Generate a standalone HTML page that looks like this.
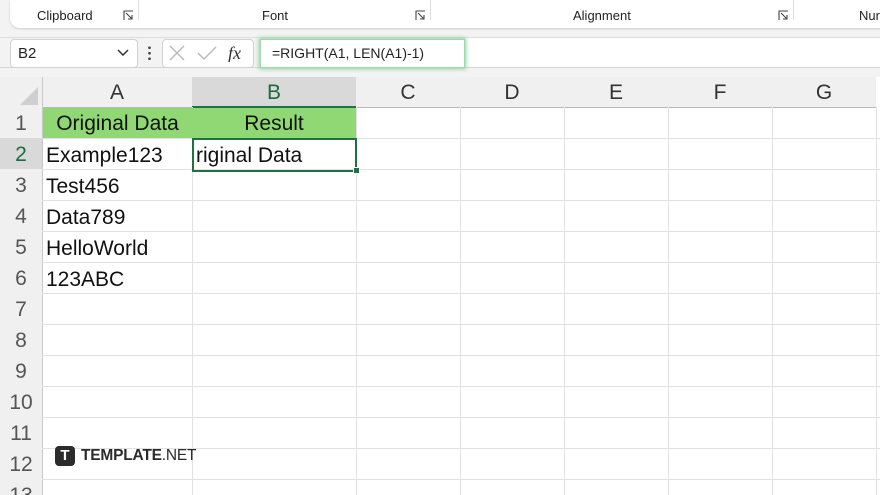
<!DOCTYPE html>
<html><head><style>
html,body{margin:0;width:880px;height:495px;overflow:hidden}
body{background:#f3f3f3;font-family:"Liberation Sans",sans-serif;position:relative}
.abs{position:absolute}
.rib{left:10px;top:0;width:880px;height:28px;background:#fff;border-radius:0 0 0 10px;box-shadow:0 1px 2px #ccc}
.rl{top:8px;font-size:13px;color:#222}
.sep{top:0;width:1px;height:20px;background:#ddd}
.grid{left:0;top:77px;width:880px;height:418px;background:#fff}
.ch{top:77px;height:30px;background:#f0f0f0;border-bottom:1px solid #b8b8b8;text-align:center;font-size:21px;line-height:32px;color:#333}
.rh{left:0;width:42px;background:#f0f0f0;text-align:center;font-size:21px;color:#555;line-height:33px;height:31px}
.vl{top:107px;width:1px;height:388px;background:#e1e1e1}
.hl{left:42px;width:838px;height:1px;background:#e1e1e1}
.cell{font-size:21px;color:#111;line-height:33px}
</style></head><body>
<div class="abs rib"></div>
<div class="abs rl" style="left:37px">Clipboard</div>
<svg class="abs" style="left:123px;top:10px" width="11" height="11"><path d="M1 10V1H10M3 3L9 9M5 9H9V5" stroke="#444" stroke-width="1.1" fill="none"/></svg>
<div class="abs sep" style="left:138px"></div>
<div class="abs rl" style="left:262px">Font</div>
<svg class="abs" style="left:415px;top:10px" width="11" height="11"><path d="M1 10V1H10M3 3L9 9M5 9H9V5" stroke="#444" stroke-width="1.1" fill="none"/></svg>
<div class="abs sep" style="left:430px"></div>
<div class="abs rl" style="left:573px">Alignment</div>
<svg class="abs" style="left:778px;top:10px" width="11" height="11"><path d="M1 10V1H10M3 3L9 9M5 9H9V5" stroke="#444" stroke-width="1.1" fill="none"/></svg>
<div class="abs sep" style="left:793px"></div>
<div class="abs rl" style="left:859px">Nur</div>
<div class="abs" style="left:0;top:37px;width:880px;height:1px;background:#ddd"></div>
<div class="abs" style="left:465px;top:38px;width:415px;height:29px;background:#fff"></div>
<div class="abs" style="left:0;top:67px;width:880px;height:1px;background:#d6d6d6"></div>
<div class="abs" style="left:10px;top:39px;width:126px;height:27px;background:#fff;border:1px solid #d0d0d0;border-radius:4px"></div>
<div class="abs" style="left:18px;top:45px;font-size:15px;color:#222">B2</div>
<svg class="abs" style="left:117px;top:49px" width="12" height="8"><path d="M1 1L6 6L11 1" stroke="#333" stroke-width="1.5" fill="none"/></svg>
<div class="abs" style="left:148px;top:45px;width:3px;height:16px;background:radial-gradient(circle,#444 1.2px,transparent 1.5px) 0 0/3px 5.5px"></div>
<div class="abs" style="left:162px;top:39px;width:90px;height:27px;background:#fff;border:1px solid #d0d0d0;border-radius:4px"></div>
<svg class="abs" style="left:168px;top:44px" width="80" height="18"><path d="M2 2L16 16M16 2L2 16" stroke="#bbb" stroke-width="1.5"/><path d="M30 9L36 15L48 3" stroke="#bbb" stroke-width="1.5" fill="none"/><text x="60" y="15" font-family="Liberation Serif" font-style="italic" font-size="18" fill="#333">fx</text></svg>
<div class="abs" style="left:260px;top:39px;width:203px;height:27px;background:#fff;box-shadow:0 0 4px 1px #8ccf9e;border:1px solid #9fd6ad"></div>
<div class="abs" style="left:272px;top:45px;font-size:14px;color:#222">=RIGHT(A1, LEN(A1)-1)</div>
<div class="abs grid"></div>
<div class="abs" style="left:0;top:77px;width:42px;height:30px;background:#f0f0f0"></div>
<svg class="abs" style="left:16px;top:87px" width="22" height="18"><path d="M22 0L22 18L4 18Z" fill="#cfcfcf"/></svg>
<div class="abs ch" style="left:42px;width:150px">A</div>
<div class="abs ch" style="left:192px;width:164px;background:#d9d9d9;color:#1d6b3c;border-bottom:2px solid #1e7145;height:29px">B</div>
<div class="abs ch" style="left:356px;width:104px">C</div>
<div class="abs ch" style="left:460px;width:104px">D</div>
<div class="abs ch" style="left:564px;width:104px">E</div>
<div class="abs ch" style="left:668px;width:104px">F</div>
<div class="abs ch" style="left:772px;width:104px">G</div>
<div class="abs" style="left:42px;top:77px;width:1px;height:418px;background:#c8c8c8"></div>
<div class="abs" style="left:0;top:107px;width:42px;height:388px;background:#f0f0f0;overflow:hidden"></div>
<div class="abs rh" style="top:107px">1</div><div class="abs rh" style="top:138px;color:#1d6b3c;background:#d9d9d9">2</div>
<div class="abs rh" style="top:169px">3</div><div class="abs rh" style="top:200px">4</div>
<div class="abs rh" style="top:231px">5</div><div class="abs rh" style="top:262px">6</div>
<div class="abs rh" style="top:293px">7</div><div class="abs rh" style="top:324px">8</div>
<div class="abs rh" style="top:355px">9</div><div class="abs rh" style="top:386px">10</div>
<div class="abs rh" style="top:417px">11</div><div class="abs rh" style="top:448px">12</div>
<div class="abs rh" style="top:479px;height:16px;overflow:hidden">13</div>
<div class="abs vl" style="left:192px"></div><div class="abs vl" style="left:356px"></div>
<div class="abs vl" style="left:460px"></div><div class="abs vl" style="left:564px"></div>
<div class="abs vl" style="left:668px"></div><div class="abs vl" style="left:772px"></div>
<div class="abs vl" style="left:876px"></div>
<div class="abs hl" style="top:138px"></div><div class="abs hl" style="top:169px"></div>
<div class="abs hl" style="top:200px"></div><div class="abs hl" style="top:231px"></div>
<div class="abs hl" style="top:262px"></div><div class="abs hl" style="top:293px"></div>
<div class="abs hl" style="top:324px"></div><div class="abs hl" style="top:355px"></div>
<div class="abs hl" style="top:386px"></div><div class="abs hl" style="top:417px"></div>
<div class="abs hl" style="top:448px"></div><div class="abs hl" style="top:479px"></div>
<div class="abs" style="left:43px;top:108px;width:313px;height:30px;background:#8fd873"></div>
<div class="abs cell" style="left:43px;top:107px;width:149px;text-align:center">Original Data</div>
<div class="abs cell" style="left:192px;top:107px;width:164px;text-align:center">Result</div>
<div class="abs cell" style="left:46px;top:139px">Example123</div>
<div class="abs cell" style="left:46px;top:170px">Test456</div>
<div class="abs cell" style="left:46px;top:201px">Data789</div>
<div class="abs cell" style="left:46px;top:232px">HelloWorld</div>
<div class="abs cell" style="left:46px;top:263px">123ABC</div>
<div class="abs" style="left:192px;top:138px;width:161px;height:30px;border:2px solid #1e7145"></div>
<div class="abs" style="left:353px;top:167px;width:5px;height:5px;background:#1e7145;border:1px solid #fff"></div>
<div class="abs cell" style="left:196px;top:139px">riginal Data</div>
<div class="abs" style="left:55px;top:446px;width:20px;height:20px;background:#2b2b2b;border-radius:4px;color:#fff;font-weight:bold;font-size:15px;text-align:center;line-height:20px">T</div>
<div class="abs" style="left:81px;top:447px;font-size:15.5px;color:#2b2b2b;letter-spacing:-0.2px"><b>TEMPLATE</b>.NET</div>
</body></html>
